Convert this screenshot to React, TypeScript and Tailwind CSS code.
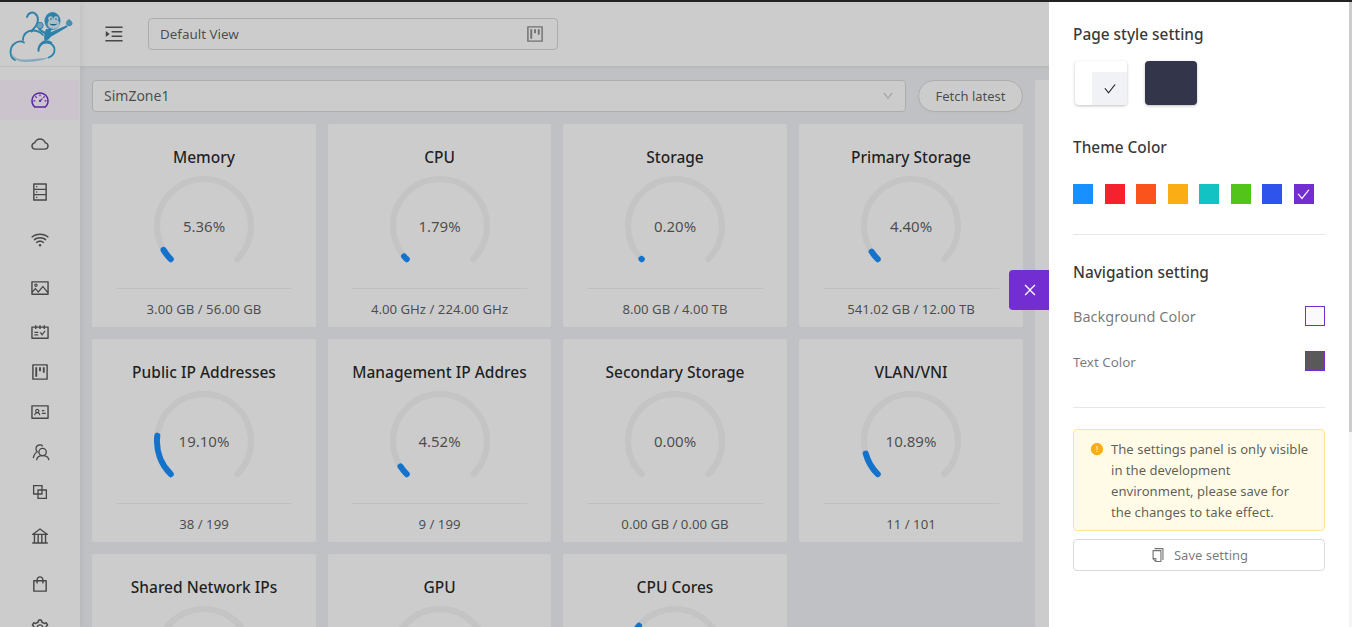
import React from "react";
import {
  AiOutlineDashboard, AiOutlineCloud, AiOutlineDatabase, AiOutlineWifi, AiOutlinePicture, AiOutlineSchedule,
  AiOutlineProject, AiOutlineIdcard, AiOutlineBlock, AiOutlineBank, AiOutlineShopping, AiOutlineSetting,
  AiOutlineMenuUnfold, AiOutlineCheck, AiOutlineDown, AiOutlineClose, AiFillExclamationCircle, AiOutlineCopy,
} from "react-icons/ai";

const F = "font-['Noto_Sans',sans-serif]";

function TeamIcon() {
  return (
    <svg width="20" height="20" viewBox="0 0 20 20" fill="none" stroke="#595959" strokeWidth="1.3">
      <circle cx="12.600" cy="10" r="3.700" />
      <path d="M6.600 18.200c.3-2.700 2.800-4.500 6-4.500s5.900 1.800 6.300 4.500" />
      <path d="M12.800 4.200c-.8-.9-2-1.400-3.300-1.200C7.300 3.300 5.900 5 6 7.100c0 1.100.500 2.100 1.200 2.700-2 1.100-3.400 3.300-3.900 6.400" />
    </svg>
  );
}

function Logo() {
  const c = "#39a3d6";
  return (
    <svg width="80" height="65" viewBox="0 2 80 65" fill="none" className="block">
      <path d="M15 60C9 57 9.500 48 14 44c3-2.500 7-3.200 10-1.500" stroke={c} strokeWidth="1.800" strokeLinecap="round" />
      <path d="M23 40c0-6 4.500-9.500 9.500-9.500 4 0 7.500 1.300 10.500 4.500" stroke={c} strokeWidth="1.800" strokeLinecap="round" />
      <path d="M38.500 51c0-5 3.500-8.500 8-8.500 5 0 8 3.500 8 7.500 0 3.500-2 6-6 7.500" stroke={c} strokeWidth="1.800" strokeLinecap="round" />
      <path d="M11 52c3 7 9 8 17 7.500 8-.4 15-1.400 21-2-7 3.500-16 4.500-24 4.500-8 0-13-4-14-10z" fill="#a9d6ec" />
      <path d="M27 17c1-4 5-5.500 8-3.500 4 3 3.500 9 .5 13-1.500 2-3 3.500-4 5" stroke={c} strokeWidth="2" strokeLinecap="round" />
      <path d="M46 29c-1.500 4-2.500 8-1.500 12 3-.5 5-2 6-4l17-10-.8-1.800-16 7 1-3.200z" fill={c} />
      <path d="M39 29c2 2 4 3.500 7 4" stroke={c} strokeWidth="2.400" />
      <ellipse cx="52.500" cy="21" rx="8" ry="9" fill={c} />
      <ellipse cx="53.500" cy="24" rx="6" ry="5" fill="#d9eef8" />
      <ellipse cx="50.500" cy="18.500" rx="2.400" ry="2.200" fill="#d9eef8" />
      <ellipse cx="56" cy="18.500" rx="2.400" ry="2.200" fill="#d9eef8" />
      <circle cx="51" cy="19" r=".8" fill="#1f6f99" />
      <circle cx="56" cy="19" r=".8" fill="#1f6f99" />
      <path d="M49.500 23.500c1.500 2.800 6 2.800 8 0-2.500.8-5.500.8-8 0z" fill="#1f7fae" />
      <circle cx="40" cy="25.500" r="3.200" fill="#8ecbe8" stroke={c} />
      <path d="M69 19.500c1.800 1.300 3.500 2.700 3 4.500-.5 2-3.500 2.300-5 .9-1.200-1.400-.6-3.700 2-5.400z" fill="#5fb5de" stroke={c} strokeWidth=".8" />
      <path d="M38 50c.5-4.500 4-9 8-9 2.500 0 4.500.6 6 2" stroke={c} strokeWidth="1.600" />
    </svg>
  );
}

const R = 47;
function arc(from: number, to: number) {
  const a = (d: number) => {
    const t = (d * Math.PI) / 180;
    return [50 - R * Math.sin(t), 50 + R * Math.cos(t)];
  };
  const [x1, y1] = a(from);
  const [x2, y2] = a(to);
  return `M${x1} ${y1}A${R} ${R} 0 ${to - from > 180 ? 1 : 0} 1 ${x2} ${y2}`;
}

function Gauge({ v, label }: { v: number; label: boolean }) {
  const start = 45;
  const end = start + (270 * v) / 100;
  return (
    <div className="relative w-[100px] h-[100px]">
      <svg width="100" height="100" viewBox="0 0 100 100" fill="none" strokeLinecap="round" strokeWidth="6">
        <path d={arc(45, 315)} stroke="#f5f5f5" />
        {v > 0 && <path d={arc(start, end)} stroke="#1890ff" />}
      </svg>
      {label && <div className="absolute inset-0 flex items-center justify-center text-[15px] text-[rgba(0,0,0,0.65)]">{v.toFixed(2)}%</div>}
    </div>
  );
}

const cards = [
  ["Memory", 5.36, "3.00 GB / 56.00 GB"],
  ["CPU", 1.79, "4.00 GHz / 224.00 GHz"],
  ["Storage", 0.2, "8.00 GB / 4.00 TB"],
  ["Primary Storage", 4.4, "541.02 GB / 12.00 TB"],
  ["Public IP Addresses", 19.1, "38 / 199"],
  ["Management IP Addres", 4.52, "9 / 199"],
  ["Secondary Storage", 0, "0.00 GB / 0.00 GB"],
  ["VLAN/VNI", 10.89, "11 / 101"],
  ["Shared Network IPs", 0, ""],
  ["GPU", 0, ""],
  ["CPU Cores", 31.5, ""],
] as [string, number, string][];

const nav: [React.ReactNode, string][] = [
  [<AiOutlineCloud size={20} />, "h-[48px]"],
  [<AiOutlineDatabase size={20} />, "h-[48px]"],
  [<AiOutlineWifi size={20} />, "h-[48px]"],
  [<AiOutlinePicture size={20} />, "h-[48px]"],
  [<AiOutlineSchedule size={20} />, "h-[40px]"],
  [<AiOutlineProject size={20} />, "h-[40px]"],
  [<AiOutlineIdcard size={20} />, "h-[40px]"],
  [<TeamIcon />, "h-[40px]"],
  [<AiOutlineBlock size={20} />, "h-[40px]"],
  [<AiOutlineBank size={20} />, "h-[48px]"],
  [<AiOutlineShopping size={20} />, "h-[48px]"],
  [<AiOutlineSetting size={20} />, "h-[40px]"],
];

const swatches = ["#1890ff", "#f5222d", "#fa541c", "#faad14", "#13c2c2", "#52c41a", "#2f54eb", "#722ed1"];
const H3 = "text-[15.4px] font-medium leading-[22px] text-[rgba(0,0,0,0.8)]";

export default function App() {
  return (
    <div className={`${F} relative h-[627px] w-[1352px] overflow-hidden bg-[#f0f2f5] text-[14px] flex flex-col`}>
      <div className="h-[2px] bg-[#222222] shrink-0 relative z-30" />
      <div className="flex-1 flex min-h-0">
        <aside className="w-[80px] shrink-0 bg-white flex flex-col shadow-[2px_0_6px_rgba(0,21,41,0.06)] relative z-10">
          <div className="h-[65px] shrink-0 border-b border-[#f0f0f0]">
            <Logo />
          </div>
          <div className="mt-[13px] h-[40px] shrink-0 w-[79px] bg-[#fff6ff] text-[#722ed1] flex items-center justify-center">
            <AiOutlineDashboard size={20} />
          </div>
          {nav.map(([icon, h], i) => (
            <div key={i} className={`${h} shrink-0 flex items-center justify-center text-[#595959]`}>{icon}</div>
          ))}
        </aside>
        <main className="flex-1 min-w-0 flex flex-col">
          <header className="h-[64px] shrink-0 bg-white shadow-[0_1px_4px_rgba(0,21,41,0.08)] flex items-center pl-[23px]">
            <AiOutlineMenuUnfold size={22} className="text-[#595959]" />
            <div className="ml-[23px] w-[410px] h-[32px] border border-[#d9d9d9] rounded-[4px] flex items-center justify-between pl-[11px] pr-[12px] text-[13.4px] text-[rgba(0,0,0,0.65)]">
              <span>Default View</span>
              <AiOutlineProject size={20} className="text-[#8c8c8c]" />
            </div>
          </header>
          <div className="flex-1 min-h-0 overflow-hidden pl-[12px] pt-[14px] flex gap-[12px]">
            <div className="w-[931px] shrink-0">
              <div className="flex gap-[12px] mb-[12px]">
                <div className="flex-1 h-[32px] bg-white border border-[#d9d9d9] rounded-[4px] flex items-center justify-between px-[11px] pb-[1px] text-[rgba(0,0,0,0.65)]">
                  <span>SimZone1</span>
                  <AiOutlineDown size={12} className="text-[#bfbfbf]" />
                </div>
                <div className="w-[105px] h-[32px] bg-white border border-[#d9d9d9] rounded-full flex items-center justify-center pt-[1px] text-[13px] text-[rgba(0,0,0,0.65)] shadow-[0_2px_0_rgba(0,0,0,0.015)]">Fetch latest</div>
              </div>
              <div className="grid grid-cols-[224px_223px_224px_224px] gap-[12px]">
                {cards.map(([t, v, s], i) => (
                  <div key={i} className="bg-white rounded-[2px] h-[203px] pt-[21px] px-[24px] flex flex-col items-center">
                    <div className="text-[15.5px] font-medium text-[rgba(0,0,0,0.85)] leading-[24px] whitespace-nowrap">{t}</div>
                    <div className="mt-[7px]"><Gauge v={v} label={i < 8} /></div>
                    <div className="w-full border-t border-[#f0f0f0] mt-[12px] pt-[10px] text-center text-[13.2px] text-[rgba(0,0,0,0.65)] leading-[20px]">{s}</div>
                  </div>
                ))}
              </div>
            </div>
            <div className="flex-1 bg-white rounded-[2px]" />
          </div>
        </main>
      </div>

      <div className="absolute inset-0 top-[2px] bg-black/20 z-20" />

      <div className="absolute top-[2px] bottom-0 right-0 w-[303px] bg-white z-30 flex text-[rgba(0,0,0,0.65)]">
        <div className="absolute left-[-40px] top-[268px] w-[40px] h-[40px] rounded-l-[4px] bg-[#722ed1] text-white flex items-center justify-center pl-[2px]">
          <AiOutlineClose size={16} />
        </div>
        <div className="w-[300px] shrink-0 px-[24px] pt-[22px]">
          <h3 className={`${H3} mb-[15px]`}>Page style setting</h3>
          <div className="flex gap-[18px] ml-[2px]">
            <div className="relative w-[52px] h-[44px] rounded-[4px] bg-white shadow-[0_1px_3px_rgba(0,0,0,0.25)] overflow-hidden">
              <div className="absolute right-0 bottom-0 w-[35px] h-[33px] bg-[#f0f2f5] flex items-center justify-center text-[#222]">
                <AiOutlineCheck size={14} />
              </div>
            </div>
            <div className="w-[52px] h-[44px] rounded-[4px] bg-[#33354a] shadow-[0_1px_3px_rgba(0,0,0,0.25)]" />
          </div>
          <h3 className={`${H3} mt-[32px]`}>Theme Color</h3>
          <div className="flex justify-between mt-[25px] w-[241px]">
            {swatches.map((c, i) => (
              <div key={i} className="w-[20px] h-[20px] flex items-center justify-center text-white" style={{ background: c }}>
                {i === 7 && <AiOutlineCheck size={15} />}
              </div>
            ))}
          </div>
          <div className="border-t border-[#e8e8e8] mt-[30px]" />
          <h3 className={`${H3} mt-[27px]`}>Navigation setting</h3>
          <div className="flex justify-between items-center mt-[22px] h-[20px] text-[14.5px] text-[rgba(0,0,0,0.55)]">
            <span className="translate-y-[1px]">Background Color</span>
            <div className="w-[20px] h-[20px] bg-[#fafafa] border-[1.5px] border-[#722ed1]" />
          </div>
          <div className="flex justify-between items-center mt-[25px] h-[20px] text-[13.4px] text-[rgba(0,0,0,0.55)]">
            <span className="translate-y-[1px]">Text Color</span>
            <div className="w-[20px] h-[20px] bg-[#595959] border-[1.5px] border-[#722ed1]" />
          </div>
          <div className="border-t border-[#e8e8e8] mt-[36px]" />
          <div className="mt-[21px] h-[102px] bg-[#fffbe6] border border-[#ffe58f] rounded-[4px] flex pl-[16px] pt-[9px] text-[13.1px] leading-[21px] text-[rgba(0,0,0,0.65)]">
            <AiFillExclamationCircle size={14} className="text-[#faad14] mt-[3px] shrink-0" />
            <span className="ml-[7px] w-[204px] whitespace-nowrap">The settings panel is only visible<br />in the development<br />environment, please save for<br />the changes to take effect.</span>
          </div>
          <div className="mt-[8px] h-[32px] border border-[#d9d9d9] rounded-[4px] flex items-center justify-center gap-[8px] text-[13px] text-[rgba(0,0,0,0.55)]">
            <AiOutlineCopy size={16} />
            <span className="translate-y-[1px]">Save setting</span>
          </div>
        </div>
        <div className="w-[3px] bg-[#f5f5f5]"><div className="h-[430px] bg-[#cccccc]" /></div>
      </div>
    </div>
  );
}
